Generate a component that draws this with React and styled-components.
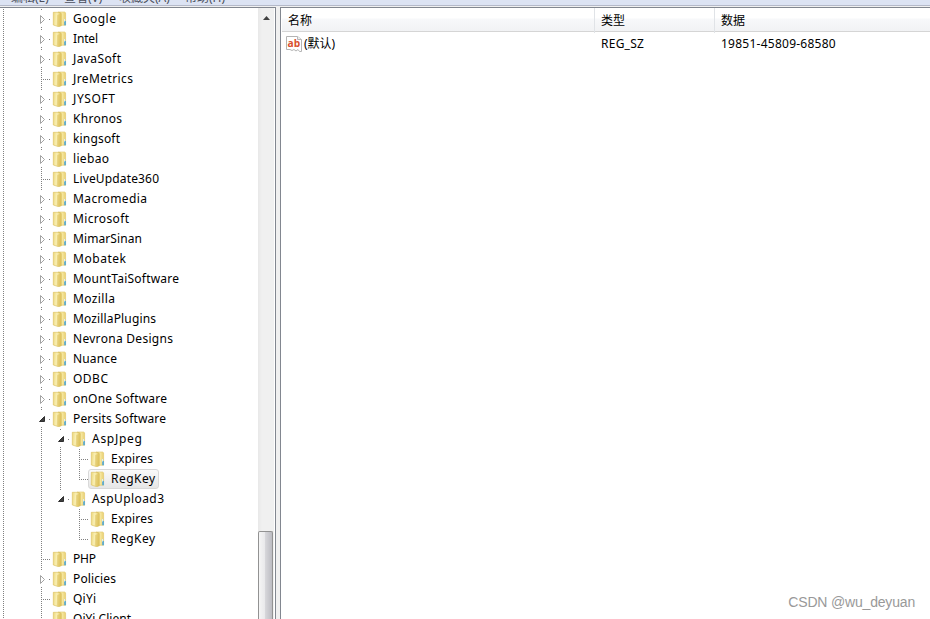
import styled, { createGlobalStyle } from "styled-components";

/* ----------- 데이터 ----------- */

const MENUS = [
  { text: "编辑(E)", left: 11 },
  { text: "查看(V)", left: 64 },
  { text: "收藏夹(A)", left: 119 },
  { text: "帮助(H)", left: 185 },
];

// [이름, 깊이, 상태, 글자 너비, 선택 여부, 마지막 가지 아래인지]
const KEYS = [
  ["Google", 0, "closed", 43],
  ["Intel", 0, "closed", 25],
  ["JavaSoft", 0, "closed", 48],
  ["JreMetrics", 0, "leaf", 60],
  ["JYSOFT", 0, "closed", 42],
  ["Khronos", 0, "closed", 49],
  ["kingsoft", 0, "closed", 47],
  ["liebao", 0, "closed", 36],
  ["LiveUpdate360", 0, "leaf", 86],
  ["Macromedia", 0, "closed", 74],
  ["Microsoft", 0, "closed", 56],
  ["MimarSinan", 0, "closed", 69],
  ["Mobatek", 0, "closed", 53],
  ["MountTaiSoftware", 0, "closed", 106],
  ["Mozilla", 0, "closed", 42],
  ["MozillaPlugins", 0, "closed", 83],
  ["Nevrona Designs", 0, "closed", 100],
  ["Nuance", 0, "closed", 44],
  ["ODBC", 0, "closed", 35],
  ["onOne Software", 0, "closed", 94],
  ["Persits Software", 0, "open", 93],
  ["AspJpeg", 1, "open", 50],
  ["Expires", 2, "leaf", 42],
  ["RegKey", 2, "last", 44, true],
  ["AspUpload3", 1, "openLast", 72],
  ["Expires", 2, "leaf", 42, false, true],
  ["RegKey", 2, "last", 44, false, true],
  ["PHP", 0, "leaf", 23],
  ["Policies", 0, "closed", 43],
  ["QiYi", 0, "leaf", 23],
  ["QiYi Client", 0, "leaf", 58],
];

/* ----------- 아이콘 ----------- */

function FolderIcon() {
  return (
    <Icon width="16" height="16" viewBox="0 0 16 16">
      <defs>
        <linearGradient id="front" x1="0" x2="1" y1="0" y2="0.15">
          <stop offset="0" stopColor="#ecd679" />
          <stop offset="0.45" stopColor="#f9efb4" />
          <stop offset="1" stopColor="#e2c866" />
        </linearGradient>
        <linearGradient id="back" x1="0" x2="1" y1="0" y2="0">
          <stop offset="0" stopColor="#c9a845" />
          <stop offset="0.5" stopColor="#f8eba6" />
          <stop offset="1" stopColor="#e8cf72" />
        </linearGradient>
      </defs>
      <path d="M7 1h6.6l1 .8v12.4H8z" fill="url(#back)" stroke="#dfc668" strokeWidth="0.6" />
      <path d="M2.3 1.3h5l3 1.3v12.2L7.6 15.7 2.3 14z" fill="url(#front)" stroke="#d9be5b" strokeWidth="0.6" />
      <path d="M6.2 4.2l3.6-1.6v12.2l-2.2.8-1.4-1z" fill="#dcc05a" fillOpacity="0.5" />
      <path d="M13.3 10h1.5v4.2h-1.5z" fill="#3fa3e0" />
      <path d="M13 8h1v2.5h-1z" fill="#d8eef8" />
    </Icon>
  );
}

function StringIcon() {
  return (
    <Icon width="16" height="16" viewBox="0 0 16 16">
      <path d="M.5.5h11l4 3v12h-2l-1.5-2-2 1.5-2-1.5-2 1-2-1H.5z" fill="#fff" stroke="#b4b4b4" />
      <path d="M11.5.5v3h4" fill="#eee" stroke="#b8b8b8" />
      <IconText x="1.6" y="11" textLength="12.6" lengthAdjust="spacingAndGlyphs">ab</IconText>
    </Icon>
  );
}

function Twisty({ open }) {
  return (
    <TwistyBox>
      <svg width="9" height="11" viewBox="0 0 9 11">
        {open ? (
          <path d="M6.5 2.5V7.5H1.5z" fill="#404040" stroke="#303030" />
        ) : (
          <path d="M2.5 1.5v8l4-4z" fill="#fff" stroke="#a2a2a2" />
        )}
      </svg>
    </TwistyBox>
  );
}

/* ----------- 트리 한 줄 ----------- */

function KeyRow({ item }) {
  const [name, depth, state, width, selected, underLast] = item;
  const open = state.startsWith("open");
  const last = state === "last" || state === "openLast";
  return (
    <Row>
      <Guide $line="full" />
      <Guide />
      {depth > 0 && <Guide $line="full" />}
      {depth > 1 && <Guide $line={underLast ? undefined : "full"} />}
      <Guide $line={last ? "half" : "full"} $branch>
        {(open || state === "closed") && <Twisty open={open} />}
      </Guide>
      <Item $selected={selected}>
        <FolderIcon />
        <Label width={width + 2} height="20">
          <text x="0" y="14" textLength={width}>{name}</text>
        </Label>
      </Item>
    </Row>
  );
}

export default function App() {
  return (
    <Window>
      <GlobalStyle />
      <MenuBar>
        {MENUS.map((m) => (
          <MenuItem key={m.text} $left={m.left}>{m.text}</MenuItem>
        ))}
      </MenuBar>
      <Panes>
        <TreePane>
          <Tree>
            {KEYS.map((item, i) => (
              <KeyRow key={i} item={item} />
            ))}
          </Tree>
          <ScrollBar>
            <ScrollArrow>
              <svg width="7" height="4" viewBox="0 0 7 4">
                <path d="M3.5 0L7 4H0z" fill="#404040" />
              </svg>
            </ScrollArrow>
            <Thumb />
          </ScrollBar>
        </TreePane>
        <ValuePane>
          <Header>
            <HeaderCell>名称</HeaderCell>
            <HeaderCell>类型</HeaderCell>
            <HeaderCell>数据</HeaderCell>
          </Header>
          <ValueRow>
            <NameCell>
              <StringIcon />
              <span>(默认)</span>
            </NameCell>
            <ValueCell>REG_SZ</ValueCell>
            <ValueCell>19851-45809-68580</ValueCell>
          </ValueRow>
        </ValuePane>
      </Panes>
      <Watermark>CSDN @wu_deyuan</Watermark>
    </Window>
  );
}

/* ===================== CSS ===================== */

const GlobalStyle = createGlobalStyle`
  body {
    margin: 0;
    overflow: hidden;
    background: #fff;
  }
`;

const Window = styled.div`
  position: relative;
  display: flex;
  flex-direction: column;
  width: 930px;
  height: 619px;
  overflow: hidden;
  background: #f0f0f0;
  color: #000;
  font-family: "Noto Sans", "Noto Sans CJK SC", sans-serif;
  font-size: 12px;
  white-space: nowrap;
`;

/* ----------- 메뉴 ----------- */

const MenuBar = styled.div`
  position: relative;
  flex: none;
  height: 5px;
  overflow: hidden;
  background: #dce3f3;
  border-bottom: 1px solid #b4b9c9;
`;

const MenuItem = styled.span`
  position: absolute;
  left: ${(p) => p.$left}px;
  bottom: 0;
  color: #4b4f5c;
  line-height: 14px;
`;

const Panes = styled.div`
  display: flex;
  flex: 1;
  min-height: 0;
  padding-top: 1px;
  gap: 4px;
`;

/* ----------- 트리 영역 ----------- */

const TreePane = styled.div`
  display: flex;
  box-sizing: border-box;
  width: 276px;
  border-top: 1px solid #828790;
  border-right: 1px solid #828790;
  background: #fff;
`;

const Tree = styled.div`
  flex: 1;
  min-width: 0;
  overflow: hidden;
  padding-top: 1px;
`;

const Row = styled.div`
  display: flex;
  height: 20px;
  margin-left: -6px;
`;

const DOTS = "#808080 0 1px, transparent 1px 2px";

const Guide = styled.div`
  display: flex;
  align-items: center;
  justify-content: center;
  flex: none;
  width: 19px;
  height: 20px;
  background-repeat: no-repeat;
  background-image:
    ${(p) => (p.$line ? `repeating-linear-gradient(to bottom, ${DOTS})` : "none")},
    ${(p) => (p.$branch ? `repeating-linear-gradient(to right, ${DOTS})` : "none")};
  background-position: 9px 0, 9px 10px;
  background-size: 1px ${(p) => (p.$line === "half" ? "11px" : "20px")}, 10px 1px;
`;

const TwistyBox = styled.div`
  display: flex;
  align-items: center;
  justify-content: center;
  width: 14px;
  height: 16px;
  padding: 1px 0 0 2px;
  box-sizing: border-box;
  background: #fff;
`;

const Item = styled.div`
  display: flex;
  align-items: center;
  box-sizing: border-box;
  height: 20px;
  margin-left: -1px;
  padding-right: 1px;
  border: 1px solid ${(p) => (p.$selected ? "#d9d9d9" : "transparent")};
  border-radius: 3px;
  background: ${(p) => (p.$selected ? "linear-gradient(#fafafa, #e6e6e6)" : "none")};
`;

const Icon = styled.svg`
  flex: none;
  display: block;
`;

const Label = styled.svg`
  flex: none;
  margin-left: 6px;
  overflow: visible;
`;

const ScrollBar = styled.div`
  display: flex;
  flex-direction: column;
  width: 17px;
  box-sizing: border-box;
  padding-right: 1px;
  border-right: 1px solid #fff;
  background: linear-gradient(to right, #e8e8e8, #f0f0f0 4px, #f0f0f0);
`;

const ScrollArrow = styled.div`
  display: flex;
  align-items: center;
  justify-content: center;
  flex: none;
  height: 19px;
  padding-left: 1px;
`;

const Thumb = styled.div`
  flex: 1;
  margin-top: 504px;
  border: 1px solid #929292;
  border-bottom: 0;
  border-radius: 2px 2px 0 0;
  background: linear-gradient(to right, #f5f5f5, #e9e9eb 45%, #d6d6da 50%, #bcbcc2);
`;

/* ----------- 값 목록 ----------- */

const ValuePane = styled.div`
  flex: 1;
  border-top: 1px solid #828790;
  border-left: 1px solid #828790;
  background: #fff;
`;

const Columns = styled.div`
  display: grid;
  grid-template-columns: 313px 120px 1fr;
`;

const Header = styled(Columns)`
  height: 23px;
  margin-left: 1px;
  border-bottom: 1px solid #d5d5d5;
  background: linear-gradient(#fff 0 10px, #f7f8fa 11px, #f1f2f4);
`;

const HeaderCell = styled.div`
  padding-left: 6px;
  border-right: 1px solid #e0e3e7;
  line-height: 25px;

  &:last-child {
    border-right: 0;
  }
`;

const ValueRow = styled(Columns)`
  height: 22px;
  margin-left: 1px;
  line-height: 23px;
`;

const NameCell = styled.div`
  display: flex;
  align-items: center;
  gap: 2px;
  padding-left: 4px;
`;

const ValueCell = styled.div`
  padding-left: 6px;
  letter-spacing: 0.25px;
`;

const IconText = styled.text`
  fill: #d9502f;
  font-family: "Open Sans", sans-serif;
  font-size: 11px;
  font-weight: 700;
`;

/* ----------- 워터마크 ----------- */

const Watermark = styled.div`
  position: absolute;
  right: 15px;
  bottom: 8px;
  color: #999;
  font-family: "Liberation Sans", Arial, sans-serif;
  font-size: 14px;
  letter-spacing: -0.18px;
  line-height: 18px;
`;
